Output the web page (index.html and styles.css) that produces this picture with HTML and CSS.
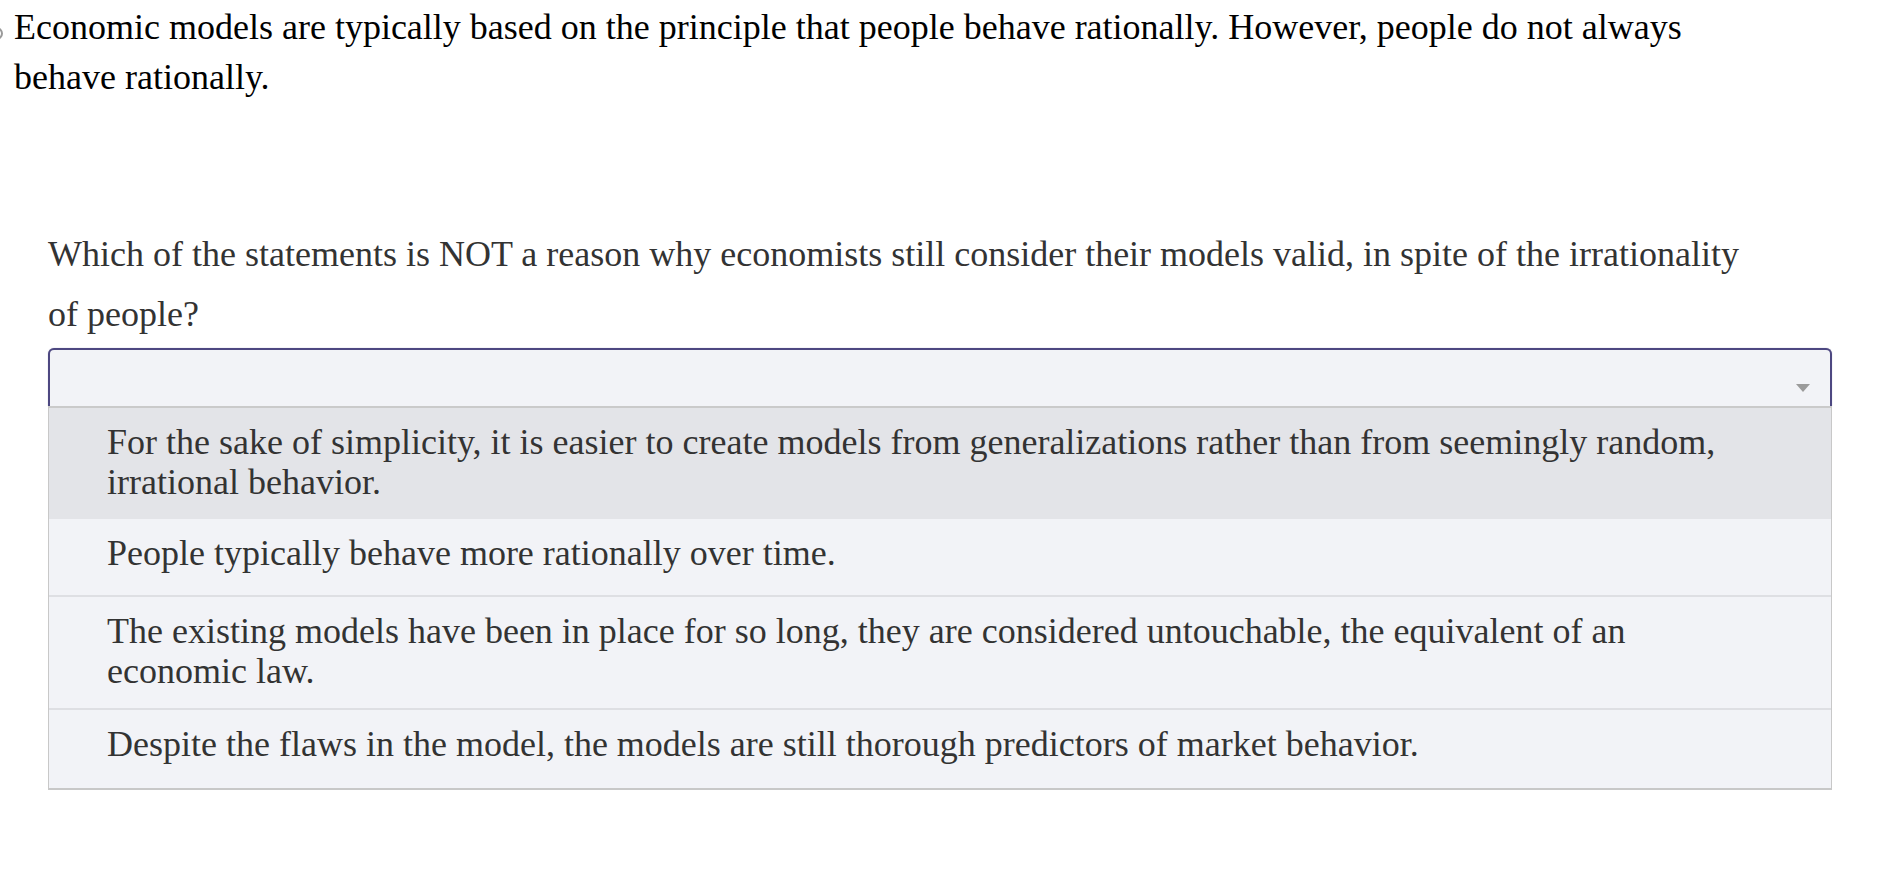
FILE: index.html
```html
<!DOCTYPE html>
<html lang="en">
<head>
<meta charset="utf-8">
<title>Question</title>
<link rel="stylesheet" href="styles.css">
</head>
<body>
<main class="page">
  <p class="intro"><span class="marker"></span>Economic models are typically based on the principle that people behave rationally. However, people do not always behave rationally.</p>
  <section class="question">
    <p class="prompt">Which of the statements is NOT a reason why economists still consider their models valid, in spite of the irrationality of people?</p>
    <div class="select">
      <div class="select-box"><span class="arrow"></span></div>
      <ul class="options">
        <li class="option active">For the sake of simplicity, it is easier to create models from generalizations rather than from seemingly random, irrational behavior.</li>
        <li class="option">People typically behave more rationally over time.</li>
        <li class="option">The existing models have been in place for so long, they are considered untouchable, the equivalent of an economic law.</li>
        <li class="option last">Despite the flaws in the model, the models are still thorough predictors of market behavior.</li>
      </ul>
    </div>
  </section>
</main>
</body>
</html>
```

FILE: styles.css
```css
html, body {
  margin: 0;
  padding: 0;
  background: #ffffff;
}

body {
  font-family: "Liberation Serif", "Times New Roman", serif;
  width: 1880px;
  height: 894px;
  overflow: hidden;
}

.page {
  display: flex;
  flex-direction: column;
}

.intro {
  position: relative;
  margin: 0;
  padding: 2px 0 0 14px;
  width: 1716px;
  font-size: 36px;
  line-height: 50px;
  color: #000000;
}

.marker {
  position: absolute;
  left: -10px;
  top: 27px;
  width: 9px;
  height: 9px;
  border: 2px solid #9a9a9a;
  border-radius: 50%;
  background: #ffffff;
}

.question {
  margin: 122px 0 0 48px;
  width: 1784px;
}

.prompt {
  margin: 0 0 4px 0;
  width: 1707px;
  font-size: 36px;
  line-height: 60px;
  color: #333333;
}

.select {
  display: flex;
  flex-direction: column;
}

.select-box {
  height: 58px;
  box-sizing: border-box;
  border: 2px solid #4d4881;
  border-bottom: none;
  border-radius: 6px 6px 0 0;
  background: #f2f3f7;
  display: flex;
  justify-content: flex-end;
  align-items: flex-start;
  padding: 34px 20px 0 0;
  box-shadow: 0 0 1px rgba(77, 72, 129, 0.5);
}

.arrow {
  width: 0;
  height: 0;
  border-left: 7.5px solid transparent;
  border-right: 7.5px solid transparent;
  border-top: 8px solid #9b9b9b;
}

.options {
  list-style: none;
  margin: 0;
  padding: 0;
  border: 1px solid #c8c8c8;
  border-top: 2px solid #cacaca;
  border-bottom: 2px solid #c8c8c8;
  background: #f2f3f7;
}

.option {
  min-height: 45px;
  padding: 14px 101px 17px 58px;
  font-size: 36px;
  line-height: 40px;
  color: #333333;
  border-bottom: 2px solid #dedfe3;
}

.option.active {
  background: #e3e4e8;
  border-bottom: none;
  padding-bottom: 17px;
}

.option.last {
  border-bottom: none;
  padding-bottom: 19px;
}
```
